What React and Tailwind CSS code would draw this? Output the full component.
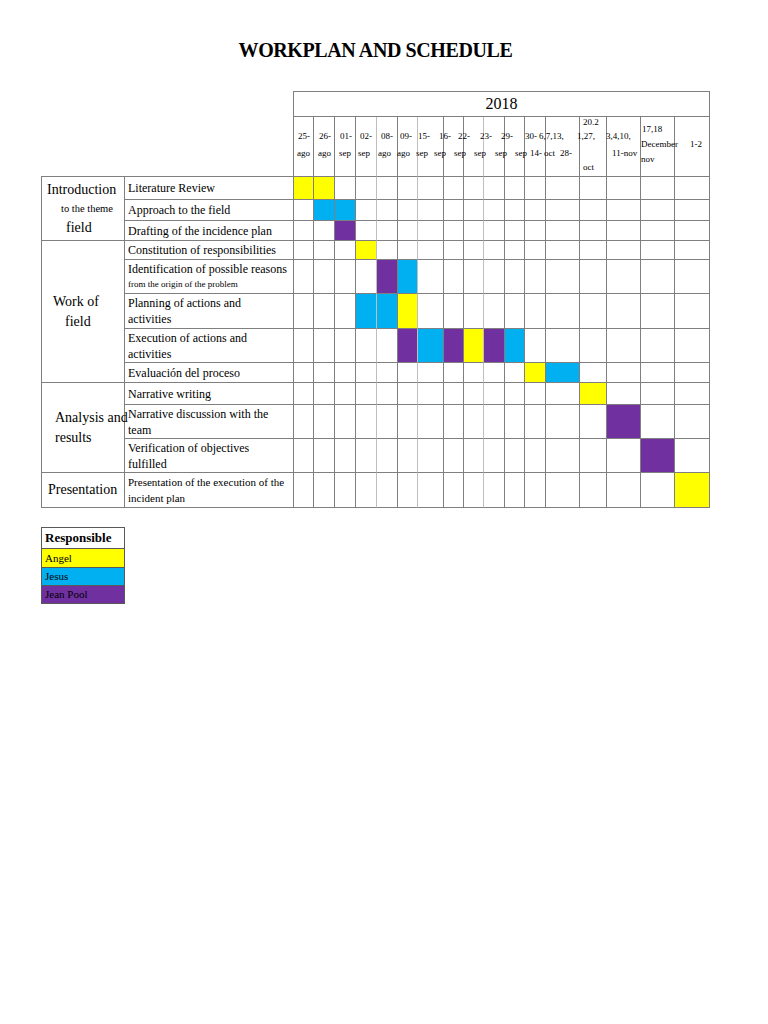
import { Fragment } from 'react';

const Y = 'bg-[#ffff00]';
const B = 'bg-[#00b0f0]';
const P = 'bg-[#7030a0]';

// date columns: header lines placed the way the sheet printed them
const dates = [
  { pt: 'pt-[14px]', lines: [{ t: '25-', c: 'ml-[4px]' }, { t: 'ago', c: 'ml-[3px] mt-[6px]' }] },
  { pt: 'pt-[14px]', lines: [{ t: '26-', c: 'ml-[5px]' }, { t: 'ago', c: 'ml-[4px] mt-[6px]' }] },
  { pt: 'pt-[14px]', lines: [{ t: '01-', c: 'ml-[5px]' }, { t: 'sep', c: 'ml-[4px] mt-[6px]' }] },
  { pt: 'pt-[14px]', light: true, lines: [{ t: '02-', c: 'ml-[4px]' }, { t: 'sep', c: 'ml-[2px] mt-[6px]' }] },
  { pt: 'pt-[14px]', lines: [{ t: '08-', c: 'ml-[4px]' }, { t: 'ago', c: 'ml-[1px] mt-[6px]' }] },
  { pt: 'pt-[14px]', light: true, lines: [{ t: '09-', c: 'ml-[2px]' }, { t: 'ago', c: 'ml-[-1px] mt-[6px]' }] },
  { pt: 'pt-[14px]', lines: [{ t: '15-', c: 'ml-[0px]' }, { t: 'sep', c: 'ml-[-2px] mt-[6px]' }] },
  { pt: 'pt-[14px]', lines: [{ t: '16-', c: 'ml-[-5px]' }, { t: 'sep', c: 'ml-[-10px] mt-[6px]' }] },
  { pt: 'pt-[14px]', light: true, lines: [{ t: '22-', c: 'ml-[-6px]' }, { t: 'sep', c: 'ml-[-10px] mt-[6px]' }] },
  { pt: 'pt-[14px]', lines: [{ t: '23-', c: 'ml-[-4px]' }, { t: 'sep', c: 'ml-[-10px] mt-[6px]' }] },
  { pt: 'pt-[14px]', lines: [{ t: '29-', c: 'ml-[-4px]' }, { t: 'sep', c: 'ml-[-10px] mt-[6px]' }] },
  {
    pt: 'pt-[14px]',
    lines: [
      { t: '30-', c: 'ml-[0px]' },
      { t: <><span>sep</span><span className="ml-[3px]">14-</span></>, c: 'ml-[-10px] mt-[6px]' },
    ],
  },
  {
    pt: 'pt-[14px]',
    lines: [
      { t: '6,7,13,', c: 'ml-[-7px]' },
      { t: <><span>oct</span><span className="ml-[5px]">28-</span></>, c: 'ml-[-2px] mt-[6px]' },
    ],
  },
  {
    pt: 'pt-[0px]',
    lines: [
      { t: '20.2', c: 'ml-[3px]' },
      { t: '1,27,', c: 'ml-[-3px] mt-[3px]' },
      { t: 'oct', c: 'ml-[3px] mt-[20px]' },
    ],
  },
  { pt: 'pt-[14px]', lines: [{ t: '3,4,10,', c: 'ml-[-1px]' }, { t: '11-nov', c: 'ml-[5px] mt-[6px]' }] },
  {
    pt: 'pt-[7px]',
    lines: [
      { t: '17,18', c: 'ml-[1px]' },
      { t: 'December', c: 'ml-[0px] mt-[4px]' },
      { t: 'nov', c: 'ml-[0px] mt-[4px]' },
    ],
  },
  { pt: 'pt-[22px]', lines: [{ t: '1-2', c: 'ml-[15px]' }] },
];

const rows = [
  { fill: { 0: Y, 1: Y }, text: <div className="text-[12px] leading-[16px]">Literature Review</div> },
  { fill: { 1: B, 2: B }, text: <div className="text-[12px] leading-[16px]">Approach to the field</div> },
  { fill: { 2: P }, text: <div className="text-[12px] leading-[16px]">Drafting of the incidence plan</div> },
  { fill: { 3: Y }, text: <div className="text-[12px] leading-[16px]">Constitution of responsibilities</div> },
  {
    fill: { 4: P, 5: B },
    text: (
      <>
        <div className="text-[12px] leading-[15px]">Identification of possible reasons</div>
        <div className="text-[9px] leading-[14px]">from the origin of the problem</div>
      </>
    ),
  },
  {
    fill: { 3: B, 4: B, 5: Y },
    text: (
      <div className="text-[12px] leading-[16px]">
        Planning of actions and
        <br />
        activities
      </div>
    ),
  },
  {
    fill: { 5: P, 6: B, 7: P, 8: Y, 9: P, 10: B },
    text: (
      <div className="text-[12px] leading-[16px]">
        Execution of actions and
        <br />
        activities
      </div>
    ),
  },
  { fill: { 11: Y, 12: B }, text: <div className="text-[12px] leading-[16px]">Evaluación del proceso</div> },
  { fill: { 13: Y }, text: <div className="text-[12px] leading-[16px]">Narrative writing</div> },
  {
    fill: { 14: P },
    text: (
      <div className="text-[12px] leading-[16px]">
        Narrative discussion with the
        <br />
        team
      </div>
    ),
  },
  {
    fill: { 15: P },
    text: (
      <div className="text-[12px] leading-[16px]">
        Verification of objectives
        <br />
        fulfilled
      </div>
    ),
  },
  {
    fill: { 16: Y },
    text: (
      <div className="text-[11px] leading-[16px]">
        Presentation of the execution of the
        <br />
        incident plan
      </div>
    ),
  },
];

const groups = {
  0: {
    span: 'row-span-3',
    body: (
      <>
        <div className="ml-[5px] text-[14px] leading-[19px]">Introduction</div>
        <div className="ml-[19px] text-[10.5px] leading-[19px]">to the theme</div>
        <div className="ml-[24px] text-[14px] leading-[19px]">field</div>
      </>
    ),
  },
  3: {
    span: 'row-span-5',
    body: (
      <>
        <div className="ml-[11px] text-[14px] leading-[20px]">Work of</div>
        <div className="ml-[23px] text-[14px] leading-[20px]">field</div>
      </>
    ),
  },
  8: {
    span: 'row-span-3',
    body: (
      <>
        <div className="ml-[13px] text-[14px] leading-[20px] whitespace-nowrap">Analysis and</div>
        <div className="ml-[13px] text-[14px] leading-[20px]">results</div>
      </>
    ),
  },
  11: {
    span: 'row-span-1',
    body: <div className="ml-[6px] text-[14px] leading-[20px]">Presentation</div>,
  },
};

const line = 'border-[#7f7f7f]';

export default function App() {
  return (
    <div className="w-[768px] min-h-[1024px] bg-white text-black font-['Liberation_Serif',serif]">
      <div className="w-[669px] ml-[41px] pt-[38px]">
        <h1 className="text-center text-[20px] leading-[24px] font-bold tracking-[-0.4px]">
          WORKPLAN AND SCHEDULE
        </h1>

        {/* schedule grid */}
        <div className="mt-[29px] grid grid-cols-[84px_169px_20px_21px_21px_21px_21px_20px_26px_20px_20px_21px_20px_21px_34px_27px_34px_34px_35px] grid-rows-[26px_60px_23px_21px_20px_19px_34px_35px_34px_20px_22px_34px_34px_35px]">
          <div className={`col-span-2 row-span-2 border-r border-b ${line}`} />
          <div className={`col-span-17 border-t border-r border-b ${line} flex items-center justify-center text-[16px]`}>
            2018
          </div>

          {dates.map((d, j) => (
            <div
              key={j}
              className={`border-r border-b ${line} ${d.light ? 'border-r-[#bfbfbf]' : ''} ${d.pt} flex flex-col text-[9px] leading-[11px]`}
            >
              {d.lines.map((l, k) => (
                <div key={k} className={`flex whitespace-nowrap ${l.c}`}>
                  {l.t}
                </div>
              ))}
            </div>
          ))}

          {rows.map((r, i) => (
            <Fragment key={i}>
              {groups[i] && (
                <div className={`${groups[i].span} border-l border-r border-b ${line} flex flex-col justify-center`}>
                  {groups[i].body}
                </div>
              )}
              <div className={`border-r border-b ${line} flex flex-col justify-center pl-[3px] whitespace-nowrap`}>
                {r.text}
              </div>
              {dates.map((d, j) => (
                <div
                  key={j}
                  className={`border-r border-b ${line} ${d.light ? 'border-r-[#bfbfbf]' : ''} ${r.fill[j] || ''}`}
                />
              ))}
            </Fragment>
          ))}
        </div>
      </div>

      {/* legend */}
      <div className="ml-[41px] mt-[19px] w-[84px] border border-[#595959]">
        <div className="h-[21px] border-b border-[#595959] pl-[3px] flex items-center text-[13px] font-bold">
          Responsible
        </div>
        <div className="h-[19px] border-b border-[#595959] bg-[#ffff00] pl-[3px] flex items-center text-[11px]">
          Angel
        </div>
        <div className="h-[18px] border-b border-[#595959] bg-[#00b0f0] pl-[3px] flex items-center text-[11px]">
          Jesus
        </div>
        <div className="h-[17px] bg-[#7030a0] pl-[3px] flex items-center text-[11px]">Jean Pool</div>
      </div>
    </div>
  );
}
